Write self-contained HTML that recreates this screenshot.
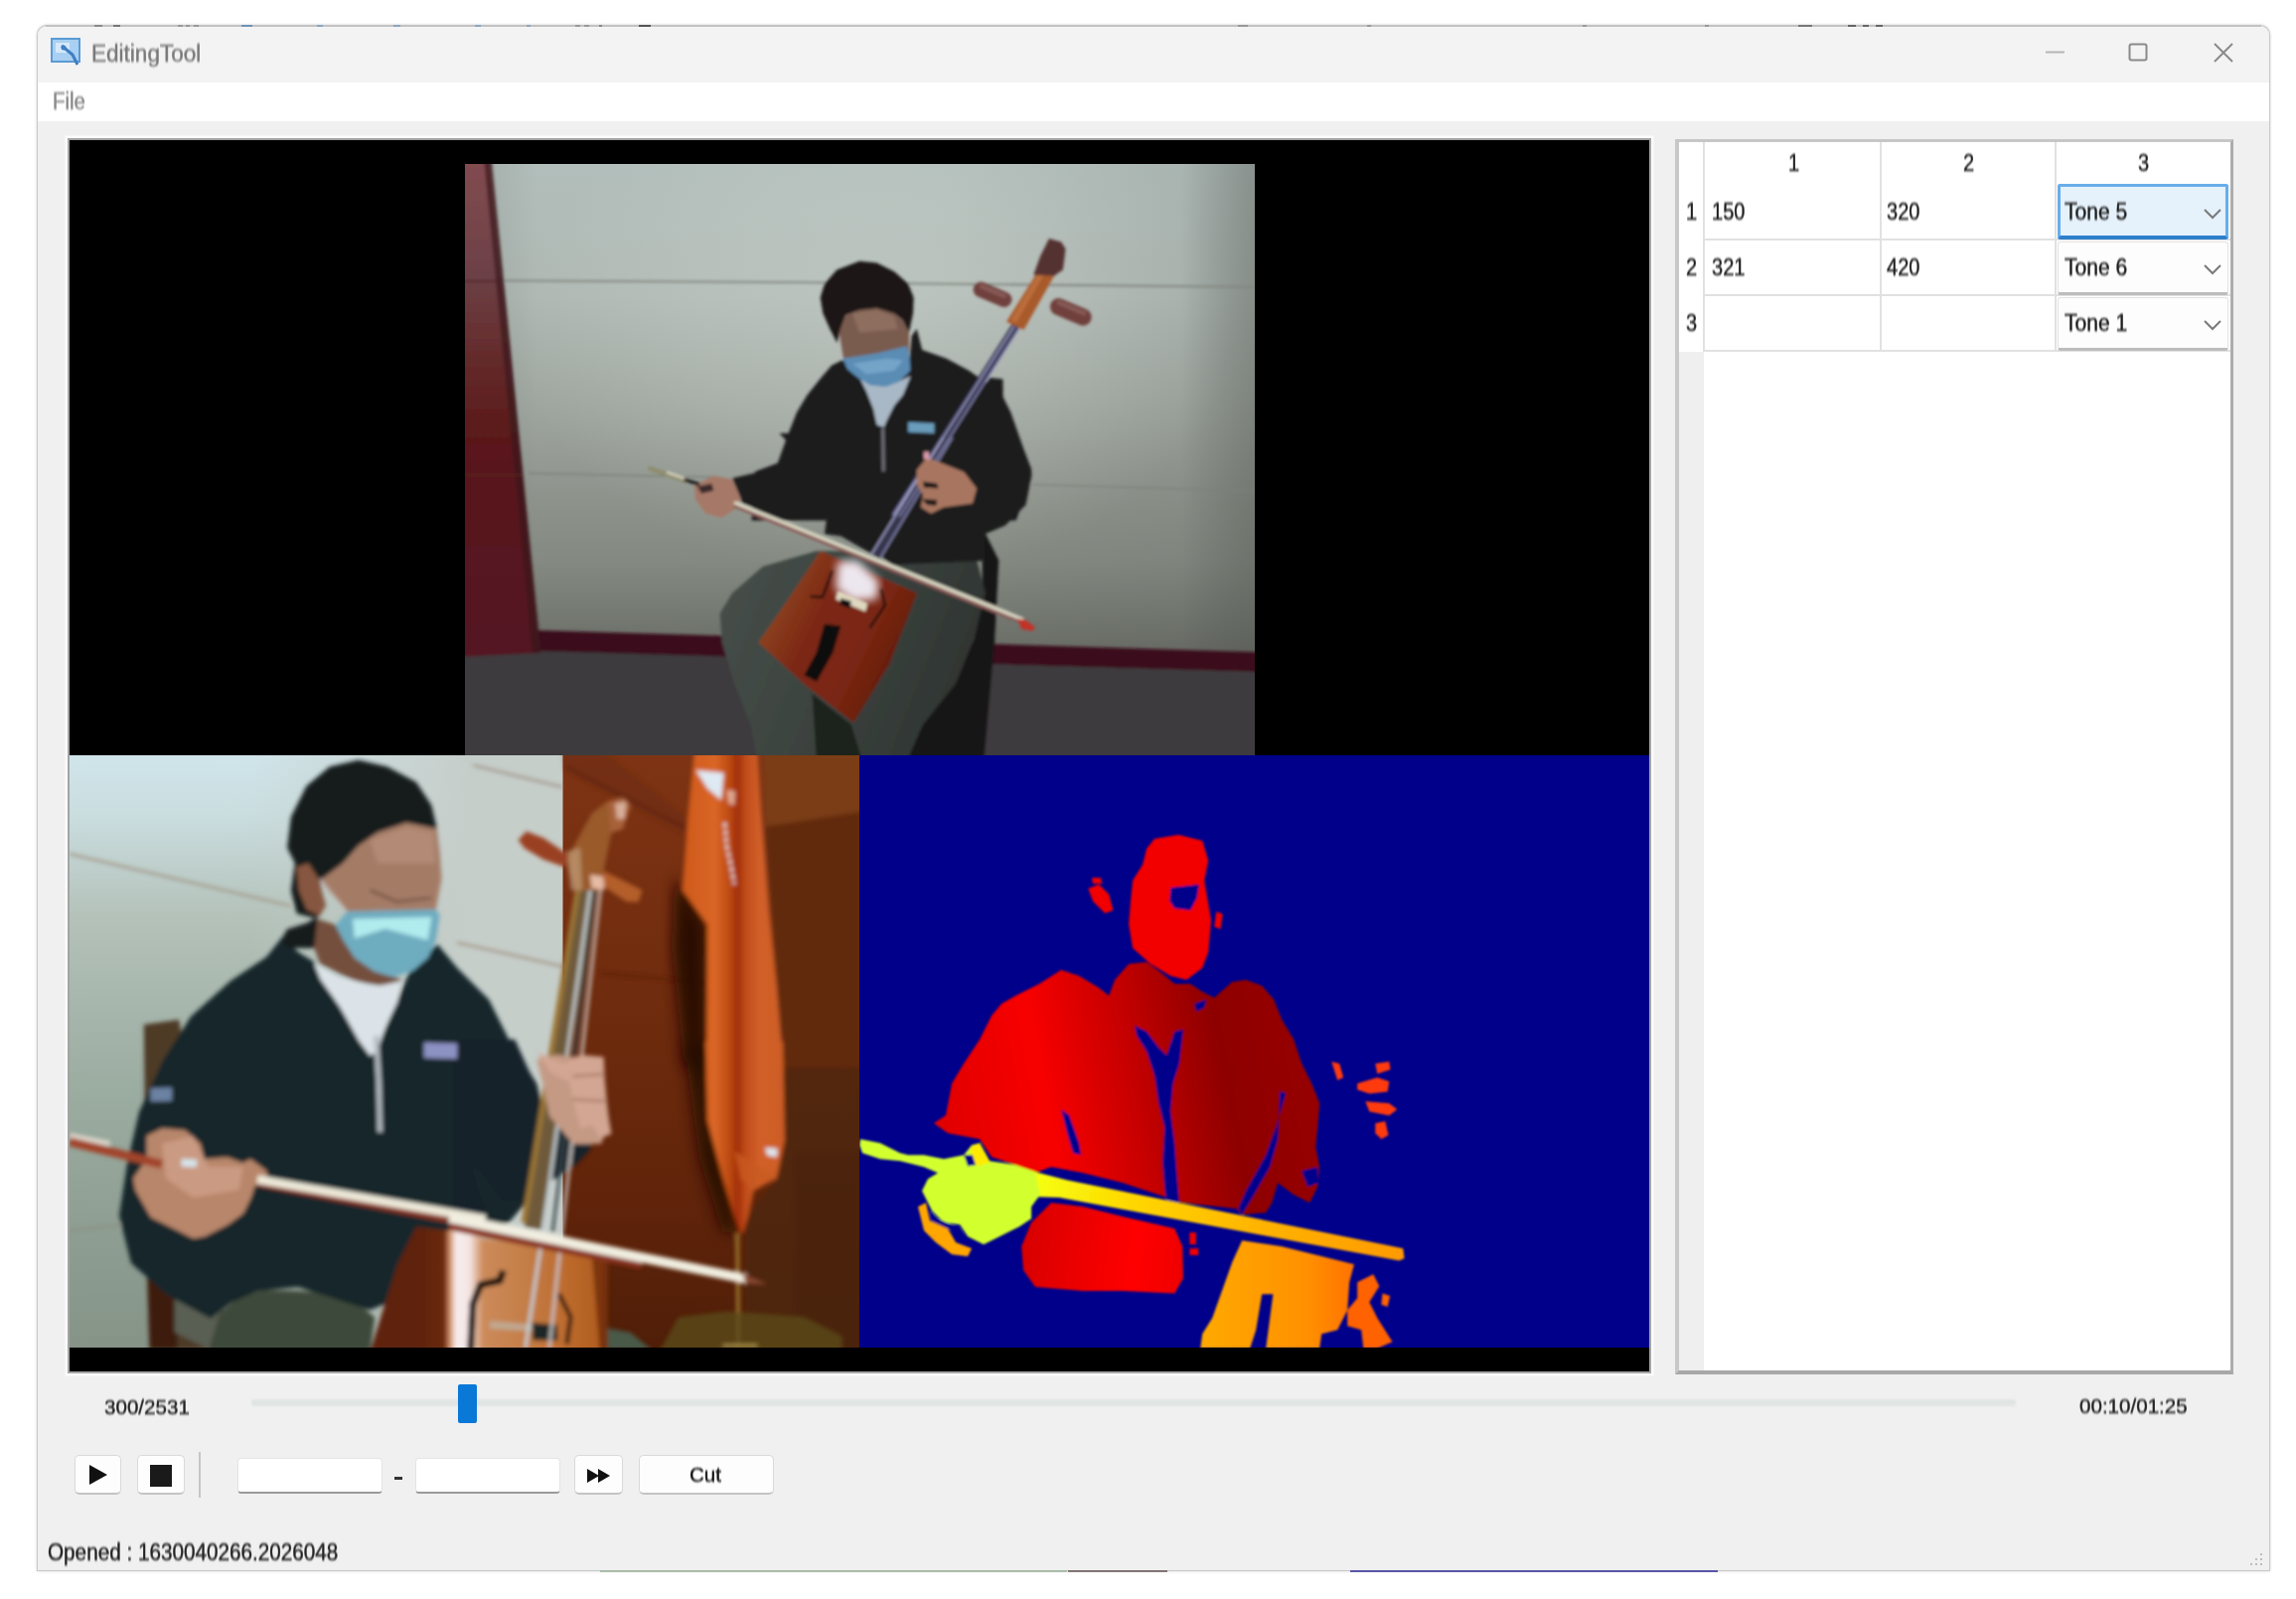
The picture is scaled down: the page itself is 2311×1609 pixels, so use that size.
<!DOCTYPE html>
<html lang="en"><head><meta charset="utf-8"><title>EditingTool</title>
<style>
*{box-sizing:border-box}
html,body{margin:0;padding:0}
body{width:2311px;height:1609px;background:#fff;position:relative;overflow:hidden;font-family:"Liberation Sans",sans-serif;color:#1a1a1a}
.abs{position:absolute}
#win{left:38px;top:26px;width:2246px;height:1554px;background:#f0f0f0;border-radius:9px 9px 0 0;box-shadow:0 0 0 1px #c9c9c9,0 0 3px 1px rgba(0,0,0,.18)}
#title{left:38px;top:27px;width:2246px;height:56px;background:#f3f3f3;border-radius:9px 9px 0 0}
#menu{left:38px;top:83px;width:2246px;height:39px;background:#fff}
.t{position:absolute;white-space:nowrap;transform-origin:0 50%;transform:scaleX(.88);filter:blur(.8px);-webkit-text-stroke:.45px currentColor}
#video{left:70px;top:141px;width:1590px;height:1239px;background:#000;box-shadow:0 0 0 2px #a4a4a4,0 0 0 4.5px #fbfbfb}
#table{left:1686px;top:140px;width:562px;height:1243px;background:#fff;border-style:solid;border-width:3px 3px 4px 4px;border-color:#c6c6c6 #adadad #a8a8a8 #c8c8c8}
.vl{position:absolute;width:2px;background:#e1e1e1}
.hl{position:absolute;height:2px;background:#e1e1e1}
.combo{position:absolute;left:2071px;width:172px;height:54px;background:#fdfdfd;border:1px solid #e2e2e2;border-bottom:3px solid #bdbdbd;border-radius:3px}
.combo.sel{background:#e5f1fb;border:3px solid #68aeea;border-bottom:4px solid #2e7fcb}
.btn{position:absolute;background:#fdfdfd;border:1px solid #d9d9d9;border-bottom:2px solid #c4c4c4;border-radius:5px}
.inp{position:absolute;background:#fff;border:1px solid #e4e4e4;border-bottom:2px solid #9a9a9a;border-radius:4px}
</style></head><body>
<div id="win" class="abs"></div>
<div id="title" class="abs"></div>
<div id="menu" class="abs"></div>
<div class="abs" style="left:46px;top:25px;width:2230px;height:2px;background:#c2c2c2"></div><div class="abs" style="left:95px;top:25px;width:8px;height:2px;background:#8a8a8a"></div><div class="abs" style="left:114px;top:25px;width:7px;height:2px;background:#777"></div><div class="abs" style="left:179px;top:25px;width:5px;height:2px;background:#999"></div><div class="abs" style="left:187px;top:25px;width:4px;height:2px;background:#999"></div><div class="abs" style="left:195px;top:25px;width:5px;height:2px;background:#999"></div><div class="abs" style="left:243px;top:25px;width:11px;height:2px;background:#6b94b8"></div><div class="abs" style="left:319px;top:25px;width:6px;height:2px;background:#8aa6c0"></div><div class="abs" style="left:396px;top:25px;width:7px;height:2px;background:#8aa6c0"></div><div class="abs" style="left:478px;top:25px;width:6px;height:2px;background:#8aa6c0"></div><div class="abs" style="left:530px;top:25px;width:4px;height:2px;background:#8aa6c0"></div><div class="abs" style="left:579px;top:25px;width:5px;height:2px;background:#999"></div><div class="abs" style="left:588px;top:25px;width:5px;height:2px;background:#999"></div><div class="abs" style="left:603px;top:25px;width:3px;height:2px;background:#888"></div><div class="abs" style="left:643px;top:25px;width:12px;height:2px;background:#555"></div><div class="abs" style="left:1246px;top:25px;width:10px;height:2px;background:#999"></div><div class="abs" style="left:1376px;top:25px;width:4px;height:2px;background:#999"></div><div class="abs" style="left:1593px;top:25px;width:4px;height:2px;background:#999"></div><div class="abs" style="left:1716px;top:25px;width:4px;height:2px;background:#999"></div><div class="abs" style="left:1810px;top:25px;width:14px;height:2px;background:#777"></div><div class="abs" style="left:1860px;top:25px;width:8px;height:2px;background:#666"></div><div class="abs" style="left:1875px;top:25px;width:6px;height:2px;background:#666"></div><div class="abs" style="left:1888px;top:25px;width:7px;height:2px;background:#666"></div>
<svg class="abs" style="left:51px;top:38px;filter:blur(.7px)" width="32" height="30" viewBox="0 0 32 30"><rect x="1" y="1" width="28" height="23" fill="#a9d0f2" stroke="#5b9bd5" stroke-width="2"/><rect x="5" y="5" width="14" height="10" fill="#d6e9f9"/><path d="M11 8 L22 17 L27 27" stroke="#3f7fc4" stroke-width="3" fill="none"/><circle cx="13" cy="10" r="2.5" fill="#3f7fc4"/></svg>
<div class="t" style="left:92px;top:40.7px;height:27.6px;line-height:27.6px;font-size:23px;color:#7a7a7a;transform:scaleX(0.98);">EditingTool</div>
<svg class="abs" style="left:2040px;top:30px;filter:blur(.6px)" width="240" height="48" viewBox="2040 30 240 48"><path d="M2059 52.5h19" stroke="#b5b5b5" stroke-width="2"/><rect x="2143.5" y="44.5" width="17" height="16" rx="2" fill="none" stroke="#8a8a8a" stroke-width="2"/><path d="M2229 44l18 18M2247 44l-18 18" stroke="#8a8a8a" stroke-width="2"/></svg>
<div class="t" style="left:53px;top:89.2px;height:27.6px;line-height:27.6px;font-size:23px;color:#8a8a8a;transform:scaleX(0.89);">File</div>
<div id="video" class="abs"></div>
<svg class="abs" style="left:468px;top:165px" width="795" height="595" viewBox="468 165 795 595">
<defs>
<linearGradient id="tWall" x1="0" y1="0" x2="0" y2="1"><stop offset="0" stop-color="#b2bebb"/><stop offset=".227" stop-color="#afb8b3"/><stop offset=".395" stop-color="#a0a7a1"/><stop offset=".563" stop-color="#8d938b"/><stop offset=".664" stop-color="#848a82"/><stop offset=".8" stop-color="#6c7069"/><stop offset="1" stop-color="#5c605a"/></linearGradient>
<linearGradient id="tWallR" x1="0" y1="0" x2="1" y2="0"><stop offset="0" stop-color="#5c605a" stop-opacity=".22"/><stop offset=".1" stop-color="#5c605a" stop-opacity="0"/><stop offset=".6" stop-color="#3c403c" stop-opacity="0"/><stop offset=".9" stop-color="#3c403c" stop-opacity=".07"/><stop offset="1" stop-color="#50544e" stop-opacity=".45"/></linearGradient>
<linearGradient id="tPil" x1="0" y1="0" x2="0" y2="1"><stop offset="0" stop-color="#824b50"/><stop offset=".23" stop-color="#6c4046"/><stop offset=".4" stop-color="#642a2a"/><stop offset=".56" stop-color="#5a1919"/><stop offset=".8" stop-color="#561620"/><stop offset="1" stop-color="#521620"/></linearGradient>
<linearGradient id="tBody" gradientUnits="userSpaceOnUse" x1="770" y1="620" x2="910" y2="690"><stop offset="0" stop-color="#8e4420"/><stop offset=".3" stop-color="#7c2814"/><stop offset=".65" stop-color="#7a2612"/><stop offset="1" stop-color="#5c180a"/></linearGradient>
<linearGradient id="tPants" gradientUnits="userSpaceOnUse" x1="730" y1="600" x2="980" y2="700"><stop offset="0" stop-color="#454d48"/><stop offset=".5" stop-color="#3b423e"/><stop offset="1" stop-color="#2e3330"/></linearGradient>
<radialGradient id="tGlow" gradientUnits="userSpaceOnUse" cx="880" cy="330" r="360" gradientTransform="translate(0 99) scale(1 .7)"><stop offset="0" stop-color="#e2e8e2" stop-opacity=".26"/><stop offset=".5" stop-color="#e2e8e2" stop-opacity=".16"/><stop offset="1" stop-color="#e2e8e2" stop-opacity="0"/></radialGradient>
<filter id="tBlur" x="-3%" y="-3%" width="106%" height="106%"><feGaussianBlur stdDeviation="1.6"/></filter>
<filter id="tBlur2" x="-10%" y="-10%" width="120%" height="120%"><feGaussianBlur stdDeviation="4"/></filter>
<clipPath id="tClip"><rect x="468" y="165" width="795" height="595"/></clipPath>
</defs>
<g clip-path="url(#tClip)">
<rect x="460" y="160" width="810" height="610" fill="url(#tWall)"/>
<rect x="460" y="160" width="810" height="610" fill="url(#tWallR)"/>
<rect x="460" y="160" width="810" height="610" fill="url(#tGlow)"/>
<g filter="url(#tBlur)">
<polyline points="464.0,282.1 800.2,284.1 1268.4,288.9" fill="none" stroke="#7f837c" stroke-width="1.8" />
<polyline points="532.0,476.2 720.1,480.2" fill="none" stroke="#7c8078" stroke-width="1.4" />
<polyline points="1032.3,487.4 1268.4,494.2" fill="none" stroke="#7c8078" stroke-width="1.4" />
<polygon points="464.0,656.2 540.0,654.2 1268.4,676.3 1268.4,764.3 464.0,764.3" fill="#3e3a3c" />
<polygon points="540.0,634.2 1268.4,656.2 1268.4,676.3 540.0,655.0" fill="#3a0e1e" />
<polygon points="464.0,162.0 493.2,162.0 508.0,300.1 526.0,480.2 543.2,657.0 464.0,661.1" fill="url(#tPil)" />
<polygon points="487.2,162.0 495.2,162.0 544.9,657.0 536.0,657.0" fill="#3a1a1e" opacity=".7"/>
<polyline points="464.0,282.9 504.0,282.9" fill="none" stroke="#4a2020" stroke-width="1.5" />
<polyline points="464.0,478.2 526.0,478.2" fill="none" stroke="#5a2a22" stroke-width="1.2" />
<polygon points="988.8,530.8 1005.3,563.8 1001.1,646.4 990.8,761.9 908.3,761.9 928.9,728.9 961.9,687.6 980.5,642.2 988.8,596.8" fill="#151515" />
<polygon points="992.0,386.2 996.4,380.1 1009.5,381.5 1009.5,402.8 1001.6,397.6" fill="#1a1a1a" />
<polygon points="724.6,617.5 737.0,596.8 767.9,570.0 821.6,554.5 848.4,554.5 898.0,567.9 982.6,561.8 991.9,596.8 980.5,642.2 961.9,687.6 928.9,728.9 914.5,761.9 761.8,761.9 755.6,728.9 739.1,687.6 726.7,646.4" fill="url(#tPants)" />
<polygon points="817.5,698.0 856.7,728.9 867.0,761.9 821.6,761.9" fill="#1e211e" />
<polygon points="847.6,362.6 837.0,367.8 826.5,380.1 812.5,397.6 802.0,415.1 791.5,441.4 782.8,465.9 760.0,474.6 756.5,523.7 1022.7,523.7 1033.2,493.9 1038.4,472.9 1029.7,450.1 1017.4,415.1 1008.6,397.6 1009.5,390.6 992.9,385.3 975.4,373.1 952.6,360.8 928.1,352.1 922.8,331.1 917.6,338.1 915.8,359.1 882.6,373.1" fill="#1a1a1c" />
<polygon points="784.5,435.9 1021.8,435.9 1038.7,477.1 1032.5,508.1 1011.9,528.7 991.2,537.4 991.2,564.2 898.0,568.4 887.6,560.1 875.3,556.0 846.4,539.5 829.9,537.4 831.9,522.5 846.4,501.9" fill="#1a1a1c" />
<polygon points="865.1,380.1 875.6,387.1 891.3,388.8 905.3,383.6 916.7,378.3 908.8,397.6 900.1,408.1 893.1,422.1 889.6,430.0 882.6,427.4 879.1,411.6 872.1,394.1" fill="#a9b8c6" />
<polygon points="844.0,331.1 851.1,317.0 865.1,310.9 882.6,309.2 900.1,314.4 908.8,322.3 915.0,331.1 915.0,359.1 882.6,362.6 849.3,362.6" fill="#7a5c50" />
<polygon points="858.1,315.3 882.6,311.8 900.1,318.8 903.6,331.1 865.1,334.6" fill="#8e6e5e" />
<polygon points="865.1,262.8 882.6,264.5 900.1,273.3 914.1,285.5 919.7,299.5 919.0,315.3 915.0,334.6 908.8,322.3 900.1,315.3 882.6,310.0 865.1,311.8 851.1,317.0 845.8,331.1 842.6,345.1 835.3,331.1 828.3,315.3 825.7,299.5 830.0,285.5 842.3,271.5" fill="#1a1715" />
<polygon points="848.4,360.8 882.6,355.6 912.7,348.2 915.5,359.1 916.2,373.1 905.3,383.9 891.3,389.2 875.6,387.4 863.3,380.1 852.8,371.3" fill="#5a8cb4" />
<polygon points="858.1,366.1 893.1,360.8 908.8,362.6 900.1,373.1 872.1,376.6" fill="#7aaace" opacity=".8"/>
<polyline points="888.7,430.9 889.2,474.6" fill="none" stroke="#6e6e78" stroke-width="3.2" />
<polygon points="914.1,424.7 940.4,426.0 940.4,436.1 914.1,434.7" fill="#6a9cbc" />
<polygon points="825.7,554.5 846.4,563.4 923.1,596.8 894.9,669.1 859.2,727.3 811.3,690.1 763.4,646.4 794.8,601.0" fill="url(#tBody)" />
<polygon points="829.9,627.8 846.4,629.9 838.5,656.7 822.0,686.0 809.2,679.4 821.6,656.7" fill="#0f0a08" />
<polygon points="843.3,564.9 862.9,563.8 884.5,584.5 882.5,603.0 858.8,605.1 841.2,592.7" fill="#ece6ee" filter="url(#tBlur2)"/>
<polyline points="838.1,574.1 827.8,601.0 815.4,599.9" fill="none" stroke="#1a0f0a" stroke-width="2.5" />
<polyline points="886.6,592.7 890.7,609.2 875.3,631.9" fill="none" stroke="#1a0f0a" stroke-width="2.5" />
<polygon points="843.3,594.8 873.2,607.2 871.1,615.4 841.2,603.0" fill="#e0d8c0" />
<polygon points="846.4,602.0 856.7,605.1 855.7,612.3 845.3,608.2" fill="#101010" />
<polyline points="1022.7,327.6 900.1,520.2" fill="none" stroke="#34344e" stroke-width="8.5" />
<polyline points="953.7,440.0 881.5,559.7" fill="none" stroke="#34344e" stroke-width="9" />
<polyline points="1020.9,328.4 899.2,518.4" fill="none" stroke="#9c9cc8" stroke-width="1.6" />
<polyline points="1026.2,329.3 905.3,520.2" fill="none" stroke="#8a8ab8" stroke-width="1.4" />
<polyline points="949.6,440.0 877.3,557.6" fill="none" stroke="#a4a4cc" stroke-width="1.6" />
<polyline points="958.8,440.0 886.6,560.7" fill="none" stroke="#9090bc" stroke-width="1.4" />
<polygon points="1013.0,323.7 1030.5,331.9 1062.0,275.9 1047.2,268.9" fill="#a85a2c" />
<polygon points="1017.4,322.3 1022.7,324.9 1052.4,273.3 1048.0,270.6" fill="#c87a44" opacity=".6"/>
<polygon points="1040.2,276.8 1047.2,257.5 1055.9,240.0 1068.2,243.5 1072.6,250.5 1069.9,271.5 1061.2,277.6" fill="#553030" />
<rect x="978.5" y="288.6" width="41.0" height="15.5" rx="7.8" transform="rotate(23 999.0 296.4)" fill="#70403e"/>
<rect x="983.5" y="291.1" width="29.0" height="4.0" rx="2" transform="rotate(23 999.0 296.4)" fill="#8e625e" opacity=".8"/>
<rect x="1055.8" y="305.4" width="44.0" height="17.0" rx="8.5" transform="rotate(23 1077.8 313.9)" fill="#70403e"/>
<rect x="1060.8" y="307.9" width="32.0" height="4.0" rx="2" transform="rotate(23 1077.8 313.9)" fill="#8e625e" opacity=".8"/>
<polygon points="922.7,473.0 933.0,460.6 949.6,466.8 970.2,475.1 983.0,491.6 978.9,506.5 949.6,510.6 937.2,516.8 926.9,510.6 928.9,497.8 922.7,487.5" fill="#a87660" />
<polygon points="928.9,484.4 943.4,486.4 944.4,491.6 929.9,490.6" fill="#1a1414" />
<polygon points="927.9,501.9 943.4,502.9 942.3,509.1 933.0,508.1" fill="#241a18" />
<polygon points="929.9,454.4 935.1,454.4 935.5,462.7 929.9,461.7" fill="#d89aa8" />
<polygon points="737.0,481.3 763.8,475.1 794.8,460.6 825.7,440.0 848.4,440.0 848.4,481.3 836.1,508.1 801.0,519.5 767.9,514.7 747.3,506.5" fill="#1a1a1c" />
<polygon points="698.8,488.5 718.4,478.8 737.0,482.3 745.7,501.9 739.5,512.6 726.7,520.9 710.2,516.8 699.8,502.3" fill="#a67868" />
<polygon points="701.9,489.5 716.4,486.4 718.4,493.7 706.0,496.8" fill="#3a2a2a" />
<polyline points="652.4,471.0 691.6,484.4" fill="none" stroke="#8e8c6e" stroke-width="4.6" />
<polyline points="671.0,475.1 691.6,482.3" fill="none" stroke="#d8d4c0" stroke-width="2.4" />
<polyline points="688.5,482.3 704.0,487.5" fill="none" stroke="#1a1a1a" stroke-width="3.5" />
<polyline points="739.1,508.1 1032.1,626.8" fill="none" stroke="#8a5a58" stroke-width="5.2" />
<polyline points="739.1,505.6 1030.0,623.3" fill="none" stroke="#d9d8c4" stroke-width="3.6" />
<polygon points="1024.3,622.6 1032.1,623.7 1042.0,630.9 1039.3,635.0 1028.0,633.0" fill="#c23226" />
</g></g></svg>
<svg class="abs" style="left:70px;top:760px" width="795" height="596" viewBox="70 760 795 596">
<defs>
<linearGradient id="bWall" gradientUnits="userSpaceOnUse" x1="70" y1="760" x2="70" y2="1356"><stop offset="0" stop-color="#d0e5eb"/><stop offset=".1" stop-color="#cadddf"/><stop offset=".27" stop-color="#b4c2ba"/><stop offset=".45" stop-color="#a5b4aa"/><stop offset=".55" stop-color="#9cada2"/><stop offset=".8" stop-color="#8e9e92"/><stop offset="1" stop-color="#869488"/></linearGradient><linearGradient id="bWallR" gradientUnits="userSpaceOnUse" x1="250" y1="0" x2="470" y2="0"><stop offset="0" stop-color="#c6ceca" stop-opacity="0"/><stop offset="1" stop-color="#c6ceca" stop-opacity="1"/></linearGradient>
<linearGradient id="bWood" gradientUnits="userSpaceOnUse" x1="567" y1="760" x2="567" y2="1356"><stop offset="0" stop-color="#7e3414"/><stop offset=".4" stop-color="#702c0e"/><stop offset=".75" stop-color="#60240a"/><stop offset="1" stop-color="#501e08"/></linearGradient>
<linearGradient id="bFlag" gradientUnits="userSpaceOnUse" x1="690" y1="0" x2="790" y2="0"><stop offset="0" stop-color="#cf5a1c"/><stop offset=".3" stop-color="#da6626"/><stop offset=".46" stop-color="#b8460e"/><stop offset=".52" stop-color="#a02c06"/><stop offset=".6" stop-color="#c04c1a"/><stop offset=".75" stop-color="#d2602a"/><stop offset="1" stop-color="#cc5c24"/></linearGradient>
<linearGradient id="bBody" gradientUnits="userSpaceOnUse" x1="420" y1="0" x2="615" y2="0"><stop offset="0" stop-color="#5e2208"/><stop offset=".14" stop-color="#6a2a0c"/><stop offset=".17" stop-color="#d4946a"/><stop offset=".2" stop-color="#f8eef0"/><stop offset=".27" stop-color="#f4e4e2"/><stop offset=".34" stop-color="#cc8a5a"/><stop offset=".55" stop-color="#c47e48"/><stop offset=".78" stop-color="#bc6a2c"/><stop offset=".95" stop-color="#b05c20"/><stop offset="1" stop-color="#6e2c0c"/></linearGradient>
<filter id="bBlur" x="-3%" y="-3%" width="106%" height="106%"><feGaussianBlur stdDeviation="2"/></filter>
<filter id="bBlur2" x="-20%" y="-20%" width="140%" height="140%"><feGaussianBlur stdDeviation="7"/></filter>
<clipPath id="bClip"><rect x="70" y="760" width="795" height="596"/></clipPath>
</defs>
<g clip-path="url(#bClip)">
<rect x="60" y="750" width="520" height="620" fill="url(#bWall)"/>
<rect x="250" y="750" width="330" height="620" fill="url(#bWallR)"/>
<rect x="566.5" y="750" width="310" height="620" fill="url(#bWood)"/>
<g filter="url(#bBlur)">
<polyline points="70.0,859.3 292.9,911.6" fill="none" stroke="#9c8c7a" stroke-width="2" />
<polyline points="460.0,948.4 566.6,972.5" fill="none" stroke="#9c8c7a" stroke-width="2" />
<polyline points="70.0,1238.4 126.2,1232.2" fill="none" stroke="#8e8e84" stroke-width="2" />
<polyline points="476.2,770.0 566.2,792.0" fill="none" stroke="#8c7868" stroke-width="1.6" />
<polygon points="566.6,756.1 607.3,756.1 692.6,824.0 692.6,841.4 568.6,775.5" fill="#6a280e" opacity=".5"/>
<polyline points="568.6,771.6 692.6,834.6" fill="none" stroke="#5e220c" stroke-width="2" />
<polyline points="770.2,832.1 867.1,816.6" fill="none" stroke="#5e260c" stroke-width="2" />
<polyline points="603.5,979.1 712.0,989.1" fill="none" stroke="#5a200a" stroke-width="2" />
<polyline points="785.7,993.0 867.1,988.7" fill="none" stroke="#5a240a" stroke-width="2" />
<polygon points="768.2,756.1 867.1,756.1 867.1,818.2 770.2,831.7" fill="#7a3c18" />
<polygon points="789.6,1050.0 867.1,1050.0 867.1,1360.2 750.8,1360.2 750.8,1224.5 781.8,1185.7" fill="#4e260a" opacity=".8"/>
<polygon points="799.2,1158.6 867.1,1158.6 867.1,1360.2 799.2,1360.2" fill="#48220a" opacity=".6"/>
<polygon points="770.2,832.1 867.1,816.6 867.1,1074.0 787.6,1074.0" fill="#622a10" />
<polygon points="679.1,884.1 688.7,893.8 712.0,930.6 712.0,1074.0 688.7,1074.0 677.1,953.9" fill="#2c0e02" filter="url(#bBlur2)" opacity="1"/>
<polygon points="688.7,1050.0 712.0,1050.0 713.9,1127.5 729.5,1185.7 743.0,1240.0 727.5,1240.0 704.3,1166.3" fill="#280c02" filter="url(#bBlur2)" opacity="1"/>
<polygon points="698.8,756.1 692.6,818.2 686.8,895.7 712.0,930.6 711.0,1074.0 788.6,1074.0 781.8,992.6 774.0,915.1 766.3,818.2 762.4,756.1" fill="url(#bFlag)" />
<polygon points="710.1,1048.1 712.0,1127.5 727.5,1185.7 739.2,1224.5 745.0,1240.9 747.9,1240.9 753.1,1224.5 758.9,1197.7 781.8,1185.7 789.9,1146.9 788.0,1048.1" fill="url(#bFlag)" />
<polygon points="739.2,1158.6 781.8,1183.8 759.5,1198.3 745.0,1185.7" fill="#c85a20" opacity=".8"/>
<polygon points="700.4,775.1 728.5,777.8 726.0,805.0 712.0,793.3" fill="#dfe9f3" />
<polyline points="729.5,827.8 731.4,851.1 735.3,868.6 739.2,889.9" fill="none" stroke="#e6d6d6" stroke-width="3.2" stroke-dasharray="5 2.5"/>
<polygon points="731.4,794.9 740.1,795.9 739.2,810.4 733.3,808.5" fill="#e8c0b0" opacity=".8"/>
<polygon points="770.2,1154.7 782.8,1155.7 781.8,1164.4 772.1,1162.4" fill="#dfe6ee" />
<polyline points="742.1,1240.9 743.4,1358.2" fill="none" stroke="#a88a34" stroke-width="3" />
<polygon points="682.9,1325.3 731.4,1319.5 808.9,1325.3 847.7,1344.7 847.7,1360.2 663.5,1360.2" fill="#5a4a1c" opacity=".8"/>
<polyline points="727.5,1354.0 762.4,1354.0" fill="none" stroke="#b09a50" stroke-width="2.5" />
<polygon points="144.8,1030.9 180.1,1026.1 184.9,1054.1 164.9,1079.0 156.0,1150.2 151.2,1274.3 154.0,1358.3 220.1,1358.3 228.1,1270.2 152.0,1150.2 145.6,1110.2" fill="#4e3a26" />
<polygon points="147.5,1263.2 178.6,1278.7 178.6,1358.2 150.4,1358.2" fill="#3e1a0e" />
<polygon points="175.7,1294.6 221.2,1296.6 223.1,1321.4 211.5,1358.2 175.7,1340.8" fill="#5a5e52" />
<polygon points="209.6,1360.2 221.2,1321.4 236.7,1307.8 263.9,1298.1 322.0,1300.1 360.8,1311.7 377.3,1325.7 372.4,1360.2" fill="#3d483a" />
<polygon points="611.2,1336.5 634.5,1340.8 655.8,1358.2 611.2,1358.2" fill="#4a5a48" />
<polygon points="284.1,942.9 300.1,958.1 316.1,968.1 340.1,1010.1 376.2,1062.1 400.2,1006.1 412.2,978.1 440.2,950.1 460.2,974.1 492.2,1006.1 512.2,1046.1 540.2,1090.2 545.0,1110.2 556.2,1134.2 536.2,1202.2 512.2,1230.2 484.2,1236.2 416.2,1240.2 392.2,1310.3 372.1,1318.3 300.1,1295.1 260.1,1299.1 232.1,1311.1 212.1,1327.1 168.1,1303.1 132.0,1271.1 120.0,1223.0 128.0,1171.0 140.0,1119.0 164.0,1067.0 192.1,1022.9 232.1,986.9 268.1,962.9" fill="#15252a" />
<polygon points="456.1,1046.1 518.2,1046.1 537.5,1088.8 541.8,1114.0 534.1,1127.5 545.7,1131.8 553.4,1118.2 600.0,1143.4 592.2,1158.9 576.7,1174.5 528.2,1205.5 506.9,1209.3 489.5,1186.1 472.0,1166.7 483.7,1205.5 489.5,1221.0 456.1,1221.0" fill="#13222a" />
<polygon points="296.8,868.6 289.1,853.1 292.9,822.0 308.4,791.0 331.7,771.6 360.8,764.8 389.9,771.6 418.9,787.1 434.4,810.4 439.9,834.6 428.6,832.1 409.2,828.2 380.2,837.9 360.8,851.5 345.3,868.9 331.7,884.5 322.0,886.4 325.9,911.6 322.0,921.3 308.4,929.0 289.1,934.9 282.3,947.1 292.9,953.9 320.1,953.9 320.1,924.8 298.7,919.3 292.9,896.1" fill="#141a1c" />
<polygon points="298.7,872.4 310.4,868.6 320.5,884.1 328.2,911.6 322.0,921.3 308.8,915.5 300.7,896.1" fill="#865640" />
<polygon points="322.0,886.0 345.3,868.6 360.8,851.1 380.2,837.5 409.2,827.8 428.6,831.7 439.9,834.1 442.6,856.9 444.5,884.1 438.7,915.5 349.2,917.4 329.8,896.1" fill="#a47c66" />
<polygon points="372.4,845.3 409.2,831.7 436.4,837.5 438.3,868.6 380.2,868.6" fill="#b48c76" opacity=".9"/>
<polyline points="372.4,895.7 399.6,907.3 434.4,903.5" fill="none" stroke="#5a3a30" stroke-width="2.2" opacity=".8"/>
<polygon points="319.7,924.8 337.5,930.6 356.9,963.5 376.3,977.1 395.7,982.9 403.8,985.3 397.6,993.0 360.8,989.1 322.0,969.8 316.2,953.9" fill="#74503e" />
<polygon points="349.2,917.0 438.7,915.1 442.6,920.9 438.7,946.1 431.0,963.5 415.4,977.1 396.1,983.3 376.7,977.5 357.3,963.9 345.7,946.5 337.9,931.0" fill="#6eacc0" />
<polygon points="355.0,924.8 434.4,922.8 430.6,946.1 387.9,934.5 356.9,944.2" fill="#bcf6f6" opacity=".85"/>
<polyline points="322.0,884.1 349.2,917.4" fill="none" stroke="#c9c4c4" stroke-width="1.4" />
<polygon points="316.2,969.4 341.4,982.9 380.2,992.6 403.8,987.2 399.9,1008.5 388.3,1031.8 380.6,1055.0 372.8,1062.8 361.2,1047.3 341.8,1012.4 322.4,985.3" fill="#dbe3e8" />
<polyline points="378.6,1042.2 381.3,1088.8 382.5,1139.2" fill="none" stroke="#b4bcc4" stroke-width="5" />
<polygon points="426.7,1049.0 460.0,1050.0 460.0,1065.5 426.7,1064.5" fill="#8c92c2" />
<polygon points="151.4,1095.0 173.1,1094.2 173.1,1107.8 151.4,1108.5" fill="#6c82a2" />
<polygon points="418.9,1234.2 482.9,1242.3 482.9,1360.2 372.4,1360.2 399.6,1272.9" fill="url(#bBody)" />
<polygon points="456.1,1243.5 568.6,1255.5 611.6,1269.1 611.6,1360.2 456.1,1360.2" fill="url(#bBody)" />
<polygon points="595.7,1263.2 611.6,1269.4 611.6,1360.2 603.5,1360.2" fill="#6e2a0c" opacity=".8"/>
<polyline points="506.5,1278.7 503.0,1288.8 483.7,1292.7 475.9,1312.1 473.6,1360.2" fill="none" stroke="#180a08" stroke-width="7" />
<polyline points="562.7,1302.0 574.4,1325.3 570.5,1352.4" fill="none" stroke="#1c0c08" stroke-width="4" />
<polygon points="493.0,1329.2 560.8,1335.0 560.8,1340.8 493.0,1336.9" fill="#c0a890" />
<polygon points="535.6,1331.1 560.8,1333.0 561.2,1348.9 536.0,1348.5" fill="#1e2626" />
<polyline points="594.3,882.1 536.2,1236.2" fill="none" stroke="#6e5a3a" stroke-width="17" />
<polyline points="583.5,882.1 527.4,1230.2" fill="none" stroke="#9a7436" stroke-width="5.5" />
<polyline points="595.5,886.1 546.2,1240.2 529.0,1356.3" fill="none" stroke="#c6d0d4" stroke-width="3.2" />
<polyline points="605.1,888.1 565.0,1244.2 553.0,1356.3" fill="none" stroke="#c8c2c0" stroke-width="3" />
<polyline points="599.5,888.1 556.2,1240.2" fill="none" stroke="#39464c" stroke-width="3" />
<polygon points="572.4,860.8 595.7,818.2 611.2,806.5 615.5,837.5 607.7,876.3 603.8,896.1 580.6,896.1 572.4,876.3" fill="#9a5a2a" />
<polygon points="611.2,806.5 627.1,802.6 634.9,810.8 627.1,834.1 615.1,837.9" fill="#a8623a" />
<polygon points="619.0,808.5 630.6,806.5 628.7,824.0 620.9,824.0" fill="#e2c0b0" opacity=".8"/>
<polygon points="570.5,856.9 584.1,853.1 586.0,895.7 574.4,895.7" fill="#c8a888" opacity=".6"/>
<polygon points="521.6,845.3 529.8,836.6 547.6,843.4 572.8,860.8 568.9,872.8 547.2,865.1 527.8,853.4" fill="#9a4020" />
<polygon points="607.3,876.3 646.5,895.7 642.6,907.7 630.6,907.3 607.3,891.8" fill="#b45e2a" />
<polygon points="593.8,880.2 607.3,882.1 608.3,895.7 595.7,893.8" fill="#e6bca4" />
<polygon points="540.2,1066.2 560.2,1061.3 596.3,1066.2 609.1,1090.2 613.1,1130.2 605.1,1151.0 577.0,1151.0 553.0,1123.0 546.6,1091.0" fill="#c49a84" />
<polygon points="541.4,1059.7 568.6,1069.4 584.1,1061.6 607.7,1063.6 609.7,1108.2 615.5,1141.1 603.8,1145.4 596.1,1131.8 584.5,1135.7 576.7,1108.2 572.8,1088.8 553.4,1079.1" fill="#d2a692" />
<polyline points="576.3,1083.0 607.3,1081.0" fill="none" stroke="#8a5a4a" stroke-width="2" opacity=".7"/>
<polyline points="576.3,1106.2 609.3,1108.2" fill="none" stroke="#8a5a4a" stroke-width="2" opacity=".7"/>
<polygon points="147.5,1143.1 163.1,1135.3 186.3,1137.2 201.8,1150.8 205.7,1166.3 229.0,1164.4 244.5,1170.2 252.2,1166.3 268.1,1177.9 270.1,1186.1 256.5,1193.8 252.6,1205.5 244.9,1221.0 229.3,1232.6 206.1,1244.2 194.5,1246.2 175.1,1236.5 151.8,1224.9 136.3,1197.7 134.0,1185.7 147.5,1166.3" fill="#b8866a" />
<polygon points="163.1,1150.8 194.1,1143.1 209.6,1174.1 244.5,1174.1 240.6,1197.3 194.1,1205.1 166.9,1185.7" fill="#cf9f88" opacity=".8"/>
<polygon points="182.4,1165.9 198.3,1166.7 197.9,1174.5 182.8,1174.1" fill="#d4e4ea" />
<polyline points="70.0,1142.7 110.7,1150.8" fill="none" stroke="#e0d8cc" stroke-width="5" />
<polyline points="70.0,1148.9 163.1,1171.7" fill="none" stroke="#a2442a" stroke-width="9" />
<polyline points="452.2,1233.8 646.1,1272.9" fill="none" stroke="#8a3422" stroke-width="8" />
<polyline points="260.0,1190.0 488.7,1233.8" fill="none" stroke="#8a3422" stroke-width="8" />
<polyline points="259.0,1186.7 488.7,1226.8" fill="none" stroke="#ece8d8" stroke-width="8.5" />
<polyline points="452.2,1225.4 750.8,1286.9" fill="none" stroke="#f0eee0" stroke-width="10" />
<polygon points="746.9,1281.7 772.5,1292.3 750.8,1291.3" fill="#8a4a30" />
</g></g></svg>
<svg class="abs" style="left:865px;top:760px" width="795" height="596" viewBox="865 760 795 596">
<defs>
<linearGradient id="dTorso" gradientUnits="userSpaceOnUse" x1="950" y1="1150" x2="1330" y2="1080"><stop offset="0" stop-color="#e00000"/><stop offset=".28" stop-color="#f80000"/><stop offset=".52" stop-color="#c40000"/><stop offset=".75" stop-color="#8e0000"/><stop offset="1" stop-color="#980000"/></linearGradient>
<linearGradient id="dLow" gradientUnits="userSpaceOnUse" x1="1030" y1="1250" x2="1190" y2="1270"><stop offset="0" stop-color="#d80000"/><stop offset=".7" stop-color="#ff0000"/><stop offset="1" stop-color="#f00000"/></linearGradient>
<linearGradient id="dBow" gradientUnits="userSpaceOnUse" x1="1045" y1="1185" x2="1412" y2="1265"><stop offset="0" stop-color="#f6ff10"/><stop offset=".25" stop-color="#ffd800"/><stop offset=".6" stop-color="#ffb400"/><stop offset="1" stop-color="#ff9a00"/></linearGradient>
<linearGradient id="dBody" gradientUnits="userSpaceOnUse" x1="1215" y1="1300" x2="1400" y2="1300"><stop offset="0" stop-color="#ffa800"/><stop offset=".55" stop-color="#ff9000"/><stop offset="1" stop-color="#ff5a00"/></linearGradient>
<filter id="dBlur" x="-5%" y="-5%" width="110%" height="110%"><feGaussianBlur stdDeviation="0.9"/></filter>
</defs>
<rect x="865" y="760" width="795" height="596" fill="#00008b"/>
<g filter="url(#dBlur)">
<polygon points="1162.1,844.0 1186.2,840.0 1210.2,846.0 1216.2,866.1 1212.2,886.1 1216.2,910.1 1219.0,926.1 1216.2,958.1 1210.2,974.1 1194.2,986.1 1178.2,982.1 1158.1,970.1 1140.1,954.1 1136.1,930.1 1138.1,906.1 1140.1,886.1 1150.1,870.1 1154.1,854.0" fill="#f20000" />
<polygon points="1178.2,893.3 1207.0,890.1 1204.6,904.1 1198.2,916.1 1182.2,914.1 1177.4,906.9" fill="#00008b" />
<polygon points="1095.3,894.1 1106.1,890.1 1116.1,900.1 1120.5,916.1 1112.1,918.9 1100.1,906.9" fill="#f20000" />
<polygon points="1098.9,883.3 1108.1,883.3 1109.3,889.3 1100.1,889.3" fill="#f20000" />
<polygon points="1224.2,917.3 1230.6,919.7 1228.6,934.9 1222.2,932.5" fill="#f20000" />
<polygon points="1068.1,976.1 1086.1,982.1 1106.1,994.1 1116.1,1002.1 1122.1,986.1 1136.1,970.1 1154.1,968.1 1170.2,980.1 1182.2,990.1 1198.2,990.1 1210.2,998.1 1222.2,1004.1 1240.2,988.1 1254.2,986.1 1270.2,992.1 1282.2,1006.1 1290.2,1026.1 1302.2,1046.1 1310.2,1070.2 1320.2,1090.2 1328.2,1110.2 1326.2,1134.2 1324.2,1154.2 1328.2,1174.2 1326.2,1194.2 1318.2,1210.2 1302.2,1202.2 1286.2,1190.2 1280.2,1210.2 1274.2,1220.2 1250.2,1222.2 1244.2,1216.2 1190.2,1210.2 1130.1,1190.2 1090.1,1180.2 1058.1,1174.2 1042.1,1180.2 1022.1,1172.2 998.1,1164.2 986.1,1146.2 954.0,1140.2 940.0,1130.2 952.0,1122.2 958.1,1090.2 970.1,1070.2 986.1,1046.1 998.1,1022.1 1008.1,1010.1 1022.1,1002.1 1046.1,990.1" fill="url(#dTorso)" />
<polygon points="1142.1,1032.1 1154.1,1038.1 1166.2,1054.1 1174.2,1062.1 1182.2,1038.1 1191.0,1036.1 1187.0,1070.2 1180.6,1090.2 1178.2,1118.2 1182.2,1150.2 1184.6,1182.2 1187.0,1210.2 1173.4,1207.0 1170.2,1170.2 1172.2,1134.2 1166.2,1110.2 1162.1,1082.2 1154.1,1058.1 1144.1,1042.1" fill="#00008b" />
<polygon points="1068.1,1116.2 1076.1,1122.2 1086.1,1150.2 1088.1,1162.2 1080.1,1160.2 1074.1,1140.2" fill="#00008b" />
<polygon points="1288.2,1098.2 1294.2,1100.2 1284.2,1134.2 1274.2,1162.2 1254.2,1198.2 1246.2,1216.2 1250.2,1222.2 1262.2,1202.2 1278.2,1174.2 1286.2,1146.2" fill="#00008b" />
<polygon points="1202.2,1010.1 1214.2,1006.1 1212.2,1014.1 1204.2,1018.1" fill="#00008b" />
<polygon points="1310.2,1178.2 1326.2,1174.2 1327.0,1190.2 1316.2,1194.2" fill="#00008b" />
<polygon points="1058.1,1210.2 1090.1,1214.2 1130.1,1224.2 1182.2,1236.2 1190.2,1254.2 1191.0,1286.3 1182.2,1301.5 1130.1,1299.1 1090.1,1299.1 1042.1,1295.1 1030.1,1278.3 1028.1,1254.2 1038.1,1230.2" fill="url(#dLow)" />
<polygon points="1197.4,1240.2 1203.8,1240.2 1203.8,1252.2 1197.4,1252.2" fill="#f00000" />
<polygon points="1197.4,1256.2 1206.2,1256.2 1206.2,1263.0 1197.4,1263.0" fill="#f00000" />
<polygon points="1250.2,1248.2 1290.2,1254.2 1363.0,1272.3 1358.2,1290.3 1356.2,1318.3 1346.2,1338.3 1330.2,1342.3 1328.2,1356.7 1274.2,1356.7 1281.4,1302.3 1270.2,1302.3 1264.2,1338.3 1258.2,1356.7 1208.2,1356.7 1210.2,1342.3 1220.2,1326.3 1230.2,1298.3 1240.2,1270.2" fill="url(#dBody)" />
<polygon points="1366.2,1290.3 1382.3,1282.3 1388.3,1294.3 1378.3,1310.3 1386.3,1326.3 1401.5,1350.3 1386.3,1356.7 1372.3,1356.7 1370.2,1338.3 1356.2,1334.3 1356.2,1318.3 1366.2,1306.3" fill="#ff6200" />
<polygon points="1391.5,1301.5 1399.1,1303.9 1396.7,1315.1 1390.3,1312.7" fill="#ff6200" />
<polygon points="1038.1,1178.2 1074.1,1187.4 1412.3,1256.2 1413.5,1266.2 1408.3,1268.6 1066.1,1205.0 1042.1,1204.2" fill="url(#dBow)" />
<polygon points="866.0,1146.2 886.0,1150.2 906.0,1160.2 914.0,1162.2 930.0,1162.2 950.0,1166.2 970.1,1162.2 978.1,1152.2 986.1,1150.2 996.1,1168.2 1022.1,1172.2 1042.1,1179.0 1046.9,1202.2 1038.1,1214.2 1038.1,1226.2 1026.1,1234.2 1010.1,1242.2 990.1,1252.2 974.1,1244.2 966.1,1232.2 950.0,1230.2 938.0,1218.2 928.0,1198.2 934.0,1186.2 944.0,1180.2 930.0,1174.2 914.0,1170.2 906.0,1168.2 886.0,1166.2 868.0,1160.2 865.2,1152.2" fill="#d2ff2d" />
<polygon points="977.3,1153.4 986.1,1150.2 996.5,1169.4 984.1,1173.4 977.3,1166.2" fill="#ffea00" />
<polygon points="970.1,1162.2 978.9,1162.2 982.1,1172.2 974.1,1173.4" fill="#00008b" />
<polygon points="924.0,1214.2 932.0,1210.2 936.0,1228.2 954.0,1236.2 962.1,1250.2 978.1,1256.2 974.1,1264.2 958.1,1262.2 942.0,1250.2 930.0,1238.2" fill="#ffa600" />
<polygon points="936.0,1218.2 944.0,1226.2 966.1,1236.2 970.1,1244.2 952.0,1235.0 938.0,1228.2" fill="#00008b" />
<polygon points="1340.2,1068.2 1348.2,1070.2 1352.2,1084.2 1346.2,1087.0" fill="#ff3a10" />
<polygon points="1384.3,1070.2 1398.3,1068.2 1399.5,1076.2 1386.3,1080.6" fill="#ff3a10" />
<polygon points="1366.2,1090.2 1386.3,1084.2 1398.3,1088.2 1396.7,1098.6 1378.3,1100.6 1366.2,1096.6" fill="#ff3a10" />
<polygon points="1374.3,1108.2 1398.3,1110.2 1406.3,1116.2 1398.3,1122.6 1378.3,1118.6" fill="#ff3a10" />
<polygon points="1384.3,1130.2 1394.3,1128.2 1397.5,1142.2 1390.3,1146.2 1384.3,1140.2" fill="#ff3a10" />
</g></svg>
<div id="table" class="abs"></div>
<div class="abs" style="left:1690px;top:143px;width:25px;height:1236px;background:#efefef"></div>
<div class="abs" style="left:1690px;top:143px;width:25px;height:211px;background:#fff"></div>
<div class="vl" style="left:1714px;top:143px;height:211px"></div>
<div class="vl" style="left:1892px;top:143px;height:211px"></div>
<div class="vl" style="left:2068px;top:143px;height:211px"></div>
<div class="hl" style="left:1715px;top:240px;width:530px"></div>
<div class="hl" style="left:1715px;top:296px;width:530px"></div>
<div class="hl" style="left:1715px;top:352px;width:530px"></div>
<div class="t" style="left:1800px;top:151.2px;height:27.6px;line-height:27.6px;font-size:23px;color:#1c1c1c;transform:scaleX(0.87);">1</div>
<div class="t" style="left:1976px;top:151.2px;height:27.6px;line-height:27.6px;font-size:23px;color:#1c1c1c;transform:scaleX(0.87);">2</div>
<div class="t" style="left:2152px;top:151.2px;height:27.6px;line-height:27.6px;font-size:23px;color:#1c1c1c;transform:scaleX(0.87);">3</div>
<div class="t" style="left:1697px;top:200.2px;height:27.6px;line-height:27.6px;font-size:23px;color:#1c1c1c;transform:scaleX(0.87);">1</div>
<div class="t" style="left:1697px;top:256.2px;height:27.6px;line-height:27.6px;font-size:23px;color:#1c1c1c;transform:scaleX(0.87);">2</div>
<div class="t" style="left:1697px;top:312.2px;height:27.6px;line-height:27.6px;font-size:23px;color:#1c1c1c;transform:scaleX(0.87);">3</div>
<div class="t" style="left:1723px;top:200.2px;height:27.6px;line-height:27.6px;font-size:23px;color:#1c1c1c;transform:scaleX(0.87);">150</div>
<div class="t" style="left:1899px;top:200.2px;height:27.6px;line-height:27.6px;font-size:23px;color:#1c1c1c;transform:scaleX(0.87);">320</div>
<div class="t" style="left:1723px;top:256.2px;height:27.6px;line-height:27.6px;font-size:23px;color:#1c1c1c;transform:scaleX(0.87);">321</div>
<div class="t" style="left:1899px;top:256.2px;height:27.6px;line-height:27.6px;font-size:23px;color:#1c1c1c;transform:scaleX(0.87);">420</div>
<div class="combo sel" style="top:185px;height:56px"></div>
<div class="combo" style="top:243px"></div>
<div class="combo" style="top:299px"></div>
<div class="t" style="left:2078px;top:200.2px;height:27.6px;line-height:27.6px;font-size:23px;color:#1c1c1c;transform:scaleX(0.915);">Tone 5</div>
<svg class="abs" style="left:2217px;top:209px;filter:blur(.5px)" width="20" height="12" viewBox="0 0 20 12"><path d="M2 2l8 8 8-8" fill="none" stroke="#7a7a7a" stroke-width="2"/></svg>
<div class="t" style="left:2078px;top:256.2px;height:27.6px;line-height:27.6px;font-size:23px;color:#1c1c1c;transform:scaleX(0.915);">Tone 6</div>
<svg class="abs" style="left:2217px;top:265px;filter:blur(.5px)" width="20" height="12" viewBox="0 0 20 12"><path d="M2 2l8 8 8-8" fill="none" stroke="#7a7a7a" stroke-width="2"/></svg>
<div class="t" style="left:2078px;top:312.2px;height:27.6px;line-height:27.6px;font-size:23px;color:#1c1c1c;transform:scaleX(0.915);">Tone 1</div>
<svg class="abs" style="left:2217px;top:321px;filter:blur(.5px)" width="20" height="12" viewBox="0 0 20 12"><path d="M2 2l8 8 8-8" fill="none" stroke="#7a7a7a" stroke-width="2"/></svg>
<div class="t" style="left:105px;top:1403.4px;height:25.2px;line-height:25.2px;font-size:21px;color:#222;transform:scaleX(0.98);">300/2531</div>
<div class="abs" style="left:253px;top:1408px;width:1776px;height:7px;background:#e0e4e3;border-radius:3px;filter:blur(.8px)"></div>
<div class="abs" style="left:461px;top:1393px;width:19px;height:39px;background:#0a78d7;border-radius:2px;filter:blur(.5px)"></div>
<div class="t" style="left:2093px;top:1402.4px;height:25.2px;line-height:25.2px;font-size:21px;color:#222;transform:scaleX(0.98);">00:10/01:25</div>
<div class="btn" style="left:75px;top:1464px;width:47px;height:40px"></div>
<svg class="abs" style="left:88px;top:1473px" width="22" height="22" viewBox="0 0 22 22"><path d="M2 1l18 10-18 10z" fill="#111"/></svg>
<div class="btn" style="left:138px;top:1464px;width:48px;height:40px"></div>
<div class="abs" style="left:151px;top:1474px;width:22px;height:22px;background:#1a1a1a"></div>
<div class="abs" style="left:200px;top:1461px;width:2px;height:46px;background:#c6c6c6"></div>
<div class="inp" style="left:239px;top:1467px;width:146px;height:36px"></div>
<div class="abs" style="left:397px;top:1486px;width:8px;height:3px;background:#333"></div>
<div class="inp" style="left:418px;top:1467px;width:146px;height:36px"></div>
<div class="btn" style="left:578px;top:1464px;width:49px;height:40px"></div>
<svg class="abs" style="left:590px;top:1477px" width="26" height="16" viewBox="0 0 26 16"><path d="M1 1l12 7-12 7zM12 1l12 7-12 7z" fill="#111"/></svg>
<div class="btn" style="left:643px;top:1464px;width:136px;height:40px"></div>
<div class="t" style="left:694px;top:1471.4px;height:25.2px;line-height:25.2px;font-size:21px;color:#111;transform:scaleX(0.98);">Cut</div>
<div class="t" style="left:48px;top:1549.2px;height:27.6px;line-height:27.6px;font-size:23px;color:#222;transform:scaleX(0.9);">Opened : 1630040266.2026048</div>
<svg class="abs" style="left:2262px;top:1560px" width="18" height="18" viewBox="0 0 18 18"><g fill="#bdbdbd"><rect x="13" y="3" width="2" height="2"/><rect x="13" y="8" width="2" height="2"/><rect x="13" y="13" width="2" height="2"/><rect x="8" y="8" width="2" height="2"/><rect x="8" y="13" width="2" height="2"/><rect x="3" y="13" width="2" height="2"/></g></svg>
<div class="abs" style="left:604px;top:1580px;width:470px;height:2px;background:#9bb59b;opacity:.8"></div>
<div class="abs" style="left:1075px;top:1580px;width:100px;height:2px;background:#6a5a5a;opacity:.8"></div>
<div class="abs" style="left:1359px;top:1580px;width:370px;height:2px;background:#5a56a8"></div>
</body></html>
